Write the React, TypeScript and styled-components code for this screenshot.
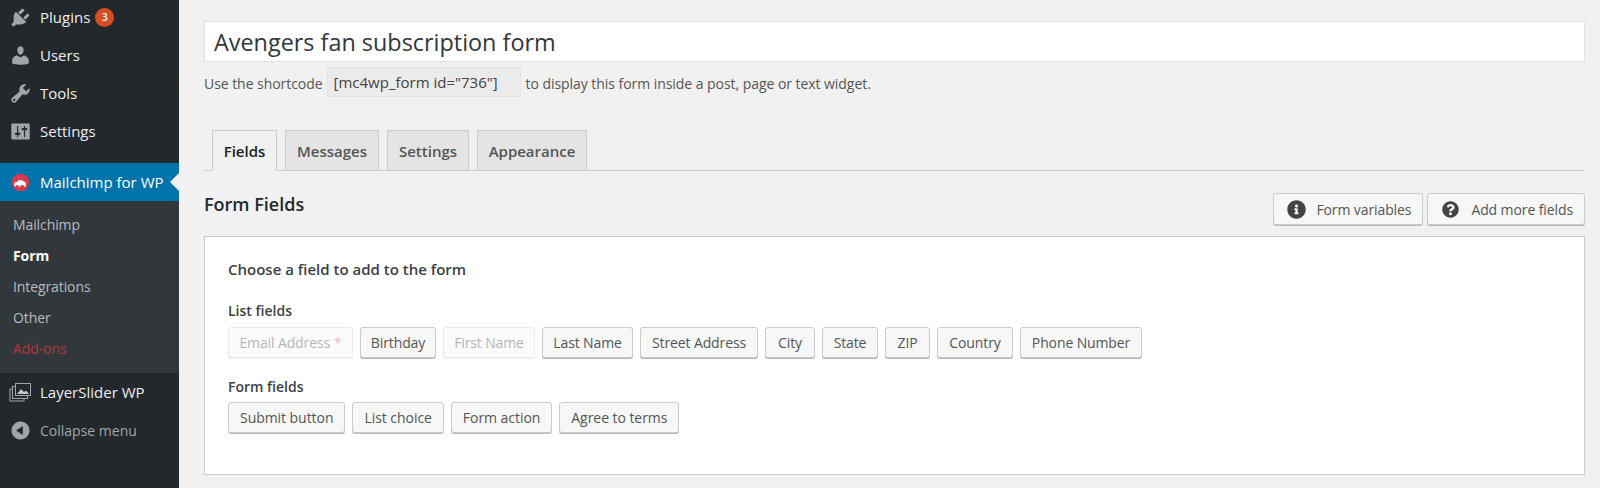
import styled, {createGlobalStyle} from "styled-components";
import {FaInfoCircle, FaQuestionCircle} from "react-icons/fa";

const GlobalStyle = createGlobalStyle`
  html, body {
    margin: 0;
    height: 488px;
    overflow: hidden;
    background: #f1f1f1;
    font-family: "Open Sans", "Liberation Sans", sans-serif;
  }
  * {
    box-sizing: border-box;
  }
`

const Page = styled.div`
  display: grid;
  grid-template-columns: 179px 1fr;
  height: 488px;
  overflow: hidden;
`

const Sidebar = styled.nav`
  background: #23282d;
  margin-top: -2px;
`

const MenuRow = styled.div<{$active?: boolean, $muted?: boolean}>`
  position: relative;
  display: flex;
  align-items: center;
  height: 38px;
  padding-left: 9px;
  gap: 8px;
  font-size: ${p => p.$muted ? 14 : 15}px;
  color: ${p => p.$muted ? "#a0a5aa" : "#eee"};
  background: ${p => p.$active ? "#0073aa" : "transparent"};

  svg {
    flex: none;
    color: #a0a5aa;
  }

  ${p => p.$active && `
    color: #fff;
    margin-top: 13px;
    &::after {
      content: "";
      position: absolute;
      right: 0;
      top: 10px;
      border: 9px solid transparent;
      border-right-color: #f1f1f1;
      border-left-width: 0;
    }
  `}
`

const Badge = styled.span`
  display: inline-flex;
  align-items: center;
  justify-content: center;
  width: 19px;
  height: 19px;
  margin-left: -3px;
  border-radius: 50%;
  background: #d54e21;
  color: #fff;
  font-size: 10px;
  font-weight: 600;
`

const SubMenu = styled.div`
  display: flex;
  flex-direction: column;
  background: #32373c;
  padding: 8px 0 9px;
`

const SubItem = styled.div<{$current?: boolean, $addon?: boolean}>`
  display: flex;
  align-items: center;
  height: 31px;
  padding-left: 13px;
  font-size: 14px;
  letter-spacing: -0.1px;
  font-weight: ${p => p.$current ? 700 : 400};
  color: ${p => p.$current ? "#fff" : p.$addon ? "#b3383f" : "rgba(240, 245, 250, 0.7)"};
`

const Main = styled.main`
  display: flex;
  flex-direction: column;
  padding: 21px 15px 0 25px;
  color: #444;
`

const TitleField = styled.div`
  height: 41px;
  padding: 0 9px;
  display: flex;
  align-items: center;
  background: #fff;
  border: 1px solid #e2e2e2;
  color: #32373c;
  font-size: 23.4px;
`

const ShortcodeRow = styled.div`
  display: flex;
  align-items: center;
  height: 30px;
  margin-top: 6px;
  font-size: 14px;
  letter-spacing: -0.05px;
  color: #555;
`

const Shortcode = styled.code`
  display: flex;
  align-items: center;
  align-self: flex-start;
  width: 194px;
  height: 30px;
  margin: -1px 5px 0 4px;
  padding-left: 6px;
  background: #ebebeb;
  border: 1px solid #e4e4e4;
  font-family: "Open Sans", sans-serif;
  font-size: 15px;
  letter-spacing: 0;
  color: #444;
`

const TabBar = styled.div`
  display: flex;
  gap: 8px;
  height: 41px;
  margin-top: 32px;
  padding-left: 8px;
  border-bottom: 1px solid #ccc;
`

const Tab = styled.div<{$active?: boolean, $width: number}>`
  display: flex;
  align-items: center;
  justify-content: center;
  width: ${p => p.$width}px;
  height: ${p => p.$active ? 41 : 40}px;
  border: 1px solid #ccc;
  border-bottom: ${p => p.$active ? "1px solid #f1f1f1" : "0"};
  background: ${p => p.$active ? "#f1f1f1" : "#e4e4e4"};
  color: ${p => p.$active ? "#222" : "#555"};
  font-size: 15px;
  font-weight: 600;
`

const SectionHead = styled.div`
  display: flex;
  align-items: center;
  justify-content: space-between;
  margin-top: 22px;
  height: 32px;
`

const SectionTitle = styled.h2`
  margin: -10px 0 0;
  font-size: 18px;
  font-weight: 600;
  color: #23282d;
`

const HeadActions = styled.div`
  display: flex;
  gap: 4px;
`

const Btn = styled.div<{$disabled?: boolean, $width?: number}>`
  display: inline-flex;
  align-items: center;
  justify-content: center;
  height: 31px;
  padding: 0 11px;
  ${p => p.$width && `width: ${p.$width}px;`}
  border: 1px solid ${p => p.$disabled ? "#ececec" : "#ccc"};
  border-radius: 3px;
  background: ${p => p.$disabled ? "#fbfbfb" : "#f7f7f7"};
  box-shadow: 0 1px 0 ${p => p.$disabled ? "#eee" : "#b5b5b5"};
  color: ${p => p.$disabled ? "#b4b7ba" : "#555"};
  font-size: 14px;
  white-space: nowrap;

  em {
    font-style: normal;
    color: #edb8b8;
    margin-left: 4px;
  }
`

const HeadBtn = styled(Btn)<{$gap: number, $left: number}>`
  height: 32px;
  padding: 0 11px 0 ${p => p.$left}px;
  gap: ${p => p.$gap}px;
  letter-spacing: -0.1px;

  svg {
    color: #444;
  }
`

const Panel = styled.section`
  height: 239px;
  margin-top: 11px;
  padding: 22px 23px 0;
  background: #fff;
  border: 1px solid #ccc;
`

const PanelTitle = styled.h3`
  margin: 0;
  font-size: 15px;
  line-height: 20px;
  font-weight: 600;
  color: #3c4146;
`

const GroupLabel = styled.h4`
  margin: 0 0 6px;
  font-size: 14px;
  line-height: 19px;
  font-weight: 600;
  color: #3c4146;
`

const Group = styled.div`
  margin-top: 22px;

  & + & {
    margin-top: 19px;
  }

  &:first-of-type ${GroupLabel} {
    margin-bottom: 7px;
  }
`

const BtnRow = styled.div<{$tight?: boolean}>`
  display: flex;
  gap: 7px;
  letter-spacing: ${p => p.$tight ? "-0.12px" : "-0.05px"};
`

const PluginIcon = () => (
    <svg width="23" height="23" viewBox="0 0 20 20" fill="currentColor">
        <path d="M13.11 4.36L9.87 7.6 8 5.73l3.24-3.24c.35-.34 1.05-.2 1.56.32.52.51.66 1.21.31 1.55zm-8 1.77l.91-1.12 9.01 9.01-1.19.84c-.71.71-2.63 1.16-3.82 1.16H6.14L4.9 17.26c-.59.59-1.54.59-2.12 0-.59-.58-.59-1.53 0-2.12l1.24-1.24v-3.88c0-1.13.4-3.19 1.09-3.89zm7.26 3.97l3.24-3.24c.34-.35 1.04-.21 1.55.31.52.51.66 1.21.31 1.55l-3.24 3.25z"/>
    </svg>
)

const UsersIcon = () => (
    <svg width="23" height="23" viewBox="0 0 20 20" fill="currentColor">
        <path d="M10 9.25c-2.27 0-2.73-3.44-2.73-3.44C7 4.02 7.82 2 9.97 2c2.16 0 2.98 2.02 2.71 3.81 0 0-.41 3.44-2.68 3.44zm0 2.57L12.72 10c2.39 0 4.52 2.33 4.52 4.53v2.49s-3.65 1.13-7.24 1.13c-3.65 0-7.24-1.13-7.24-1.13v-2.49c0-2.25 1.94-4.48 4.47-4.48z"/>
    </svg>
)

const ToolsIcon = () => (
    <svg width="23" height="23" viewBox="0 0 20 20" fill="currentColor">
        <path d="M16.68 9.77c-1.34 1.34-3.3 1.67-4.95.99l-5.41 6.52c-.99.99-2.59.99-3.58 0s-.99-2.59 0-3.57l6.52-5.42c-.68-1.65-.35-3.61.99-4.95 1.28-1.28 3.12-1.62 4.72-1.06l-2.89 2.89 2.82 2.82 2.86-2.87c.53 1.58.18 3.39-1.08 4.65zM3.81 16.21c.4.39 1.04.39 1.43 0 .4-.4.4-1.04 0-1.43-.39-.4-1.03-.4-1.43 0-.39.39-.39 1.03 0 1.43z"/>
    </svg>
)

const SettingsIcon = () => (
    <svg width="23" height="23" viewBox="0 0 20 20" fill="currentColor">
        <path d="M18 16V4c0-.55-.45-1-1-1H3c-.55 0-1 .45-1 1v12c0 .55.45 1 1 1h14c.55 0 1-.45 1-1zM8 11h1c.55 0 1 .45 1 1s-.45 1-1 1H8v1.5c0 .28-.22.5-.5.5s-.5-.22-.5-.5V13H6c-.55 0-1-.45-1-1s.45-1 1-1h1V5.500c0-.28.22-.5.5-.5s.5.22.5.5V11zm5-2h-1c-.55 0-1-.45-1-1s.45-1 1-1h1V5.500c0-.28.22-.5.5-.5s.5.22.5.5V7h1c.55 0 1 .45 1 1s-.45 1-1 1h-1v5.500c0 .28-.22.5-.5.5s-.5-.22-.5-.5V9z"/>
    </svg>
)

const MailchimpIcon = () => (
    <svg width="23" height="23" viewBox="0 0 23 23">
        <circle cx="11.500" cy="11.500" r="8.700" fill="#d9394a"/>
        <path d="M5 15l.5-3.500 2.500-.5 2-2.500 1.500 1 1.500-.5 1.500 1.500 2 .5.5 4.500h-2l-.5-1.500h-2.500l-.5 1.500h-2l-.5-1.500H7.500l-.5 1.500z" fill="#fff"/>
    </svg>
)

const LayerIcon = () => (
    <svg width="23" height="23" viewBox="0 0 23 23" fill="none" stroke="#a0a5aa">
        <rect x="1" y="8" width="14" height="12" fill="#23282d"/>
        <rect x="3.500" y="5.500" width="15" height="12" fill="#23282d"/>
        <rect x="6.500" y="2.500" width="15" height="12" fill="#23282d"/>
        <path d="M8 13l4-5 3 3 2-1.500 3 3.500z" fill="#c5c8cb" stroke="none"/>
    </svg>
)

const CollapseIcon = () => (
    <svg width="23" height="23" viewBox="0 0 20 20" fill="currentColor">
        <path d="M10 2.160c4.330 0 7.840 3.510 7.840 7.840s-3.510 7.840-7.840 7.840S2.160 14.330 2.160 10 5.710 2.160 10 2.160zm2 11.720V6.120L6.180 9.960z"/>
    </svg>
)

const listFields = [
    {label: "Birthday", width: 76},
    {label: "First Name", width: 92, disabled: true},
    {label: "Last Name", width: 91},
    {label: "Street Address", width: 118},
    {label: "City", width: 50},
    {label: "State", width: 56},
    {label: "ZIP", width: 45},
    {label: "Country", width: 76},
    {label: "Phone Number", width: 122},
]

const formFields = ["Submit button", "List choice", "Form action", "Agree to terms"]

const tabs = [
    {label: "Fields", width: 65, active: true},
    {label: "Messages", width: 94},
    {label: "Settings", width: 82},
    {label: "Appearance", width: 110},
]

export default function App() {
    return (
        <Page>
            <GlobalStyle/>
            <Sidebar>
                <MenuRow><PluginIcon/>Plugins <Badge>3</Badge></MenuRow>
                <MenuRow><UsersIcon/>Users</MenuRow>
                <MenuRow><ToolsIcon/>Tools</MenuRow>
                <MenuRow><SettingsIcon/>Settings</MenuRow>
                <MenuRow $active><MailchimpIcon/>Mailchimp for WP</MenuRow>
                <SubMenu>
                    <SubItem>Mailchimp</SubItem>
                    <SubItem $current>Form</SubItem>
                    <SubItem>Integrations</SubItem>
                    <SubItem>Other</SubItem>
                    <SubItem $addon>Add-ons</SubItem>
                </SubMenu>
                <MenuRow><LayerIcon/>LayerSlider WP</MenuRow>
                <MenuRow $muted><CollapseIcon/>Collapse menu</MenuRow>
            </Sidebar>
            <Main>
                <TitleField>Avengers fan subscription form</TitleField>
                <ShortcodeRow>
                    Use the shortcode
                    <Shortcode>[mc4wp_form id="736"]</Shortcode>
                    to display this form inside a post, page or text widget.
                </ShortcodeRow>
                <TabBar>
                    {tabs.map(t => (
                        <Tab key={t.label} $active={t.active} $width={t.width}>{t.label}</Tab>
                    ))}
                </TabBar>
                <SectionHead>
                    <SectionTitle>Form Fields</SectionTitle>
                    <HeadActions>
                        <HeadBtn $gap={10} $left={13}><FaInfoCircle size={19}/>Form variables</HeadBtn>
                        <HeadBtn $gap={12} $left={14}><FaQuestionCircle size={17}/>Add more fields</HeadBtn>
                    </HeadActions>
                </SectionHead>
                <Panel>
                    <PanelTitle>Choose a field to add to the form</PanelTitle>
                    <Group>
                        <GroupLabel>List fields</GroupLabel>
                        <BtnRow $tight>
                            <Btn $disabled $width={125}>Email Address<em>*</em></Btn>
                            {listFields.map(f => (
                                <Btn key={f.label} $disabled={f.disabled} $width={f.width}>{f.label}</Btn>
                            ))}
                        </BtnRow>
                    </Group>
                    <Group>
                        <GroupLabel>Form fields</GroupLabel>
                        <BtnRow>
                            {formFields.map(f => <Btn key={f}>{f}</Btn>)}
                        </BtnRow>
                    </Group>
                </Panel>
            </Main>
        </Page>
    )
}
